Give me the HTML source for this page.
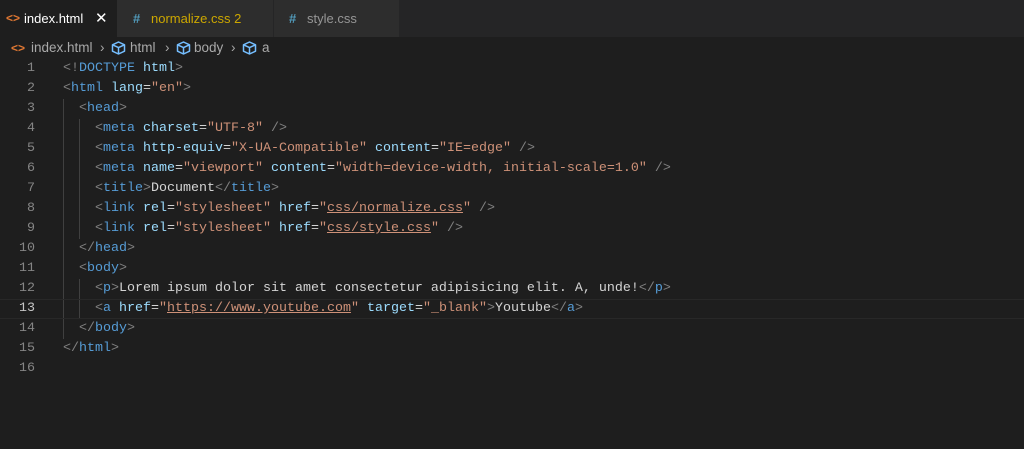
<!DOCTYPE html>
<html><head><style>
*{margin:0;padding:0;box-sizing:border-box}
body{width:1024px;height:449px;background:#1e1e1e;overflow:hidden;font-family:"Liberation Sans",sans-serif;position:relative}
.tabs{position:absolute;left:0;top:0;width:1024px;height:37px;background:#252526}
.tab{position:absolute;top:0;height:37px;font-size:13px;line-height:37px;white-space:nowrap}
.t1{left:0;width:117px;background:#1e1e1e;color:#fff}
.t2{left:117px;width:156px;background:#2d2d2d;color:#cca700}
.t3{left:274px;width:125px;background:#2d2d2d;color:#969696}
.hash{color:#519aba;font-weight:bold;margin-right:10px}
.bc{position:absolute;top:38px;left:0;height:20px;width:400px;font-size:13.5px;color:#a9a9a9;white-space:nowrap}
.bc span,.bc svg{position:absolute;top:0;line-height:20px}
.bc svg{top:3px}
.code{position:absolute;top:59px;left:0;width:1024px;font-family:"Liberation Mono",monospace;font-size:13.33px}
.ln{height:20px;line-height:20px;white-space:pre;position:relative}
.n{position:absolute;left:0;width:35px;text-align:right;color:#858585}
.c{position:absolute;left:63px;color:#d4d4d4}
.cur{border-top:1px solid #282828;border-bottom:1px solid #282828;}
.cur .n{color:#c6c6c6}
.g{color:#808080}.t{color:#569cd6}.a{color:#9cdcfe}.s{color:#ce9178}.u{text-decoration:underline}
.guide{position:absolute;width:1px;background:#404040}
</style></head><body>
<div class="tabs">
 <div class="tab t1"><span style="position:absolute;left:6px;color:#e37933;font-size:12px;font-weight:bold">&lt;&gt;</span><span style="position:absolute;left:24px">index.html</span><span style="position:absolute;left:95px;font-size:15px">✕</span></div>
 <div class="tab t2"><span style="position:absolute;left:16px" class="hash">#</span><span style="position:absolute;left:34px">normalize.css 2</span></div>
 <div class="tab t3"><span style="position:absolute;left:15px" class="hash">#</span><span style="position:absolute;left:33px">style.css</span></div>
</div>
<div class="bc">
<span style="left:11px;color:#e37933;font-weight:bold;font-size:12px">&lt;&gt;</span>
<span style="left:31px">index.html</span>
<span style="left:100px">›</span>
<svg style="left:111px" width="15" height="14" viewBox="0 0 15 14"><path d="M7.5 1L13.5 3.8V10.2L7.5 13L1.5 10.2V3.8Z M1.5 3.8L7.5 6.6L13.5 3.8 M7.5 6.6V13" fill="none" stroke="#75beff" stroke-width="1.5" stroke-linejoin="round"/></svg>
<span style="left:130px">html</span>
<span style="left:165px">›</span>
<svg style="left:176px" width="15" height="14" viewBox="0 0 15 14"><path d="M7.5 1L13.5 3.8V10.2L7.5 13L1.5 10.2V3.8Z M1.5 3.8L7.5 6.6L13.5 3.8 M7.5 6.6V13" fill="none" stroke="#75beff" stroke-width="1.5" stroke-linejoin="round"/></svg>
<span style="left:194px">body</span>
<span style="left:231px">›</span>
<svg style="left:242px" width="15" height="14" viewBox="0 0 15 14"><path d="M7.5 1L13.5 3.8V10.2L7.5 13L1.5 10.2V3.8Z M1.5 3.8L7.5 6.6L13.5 3.8 M7.5 6.6V13" fill="none" stroke="#75beff" stroke-width="1.5" stroke-linejoin="round"/></svg>
<span style="left:262px">a</span>
</div>
<div class="code">
<div class="guide" style="left:63px;top:40px;height:240px"></div>
<div class="guide" style="left:79px;top:60px;height:120px"></div>
<div class="guide" style="left:79px;top:220px;height:40px"></div>
<div class="ln"><span class="n">1</span><span class="c"><span class="g">&lt;!</span><span class="t">DOCTYPE</span> <span class="a">html</span><span class="g">&gt;</span></span></div>
<div class="ln"><span class="n">2</span><span class="c"><span class="g">&lt;</span><span class="t">html</span> <span class="a">lang</span>=<span class="s">"en"</span><span class="g">&gt;</span></span></div>
<div class="ln"><span class="n">3</span><span class="c">  <span class="g">&lt;</span><span class="t">head</span><span class="g">&gt;</span></span></div>
<div class="ln"><span class="n">4</span><span class="c">    <span class="g">&lt;</span><span class="t">meta</span> <span class="a">charset</span>=<span class="s">"UTF-8"</span> <span class="g">/&gt;</span></span></div>
<div class="ln"><span class="n">5</span><span class="c">    <span class="g">&lt;</span><span class="t">meta</span> <span class="a">http-equiv</span>=<span class="s">"X-UA-Compatible"</span> <span class="a">content</span>=<span class="s">"IE=edge"</span> <span class="g">/&gt;</span></span></div>
<div class="ln"><span class="n">6</span><span class="c">    <span class="g">&lt;</span><span class="t">meta</span> <span class="a">name</span>=<span class="s">"viewport"</span> <span class="a">content</span>=<span class="s">"width=device-width, initial-scale=1.0"</span> <span class="g">/&gt;</span></span></div>
<div class="ln"><span class="n">7</span><span class="c">    <span class="g">&lt;</span><span class="t">title</span><span class="g">&gt;</span>Document<span class="g">&lt;/</span><span class="t">title</span><span class="g">&gt;</span></span></div>
<div class="ln"><span class="n">8</span><span class="c">    <span class="g">&lt;</span><span class="t">link</span> <span class="a">rel</span>=<span class="s">"stylesheet"</span> <span class="a">href</span>=<span class="s">"<span class="u">css/normalize.css</span>"</span> <span class="g">/&gt;</span></span></div>
<div class="ln"><span class="n">9</span><span class="c">    <span class="g">&lt;</span><span class="t">link</span> <span class="a">rel</span>=<span class="s">"stylesheet"</span> <span class="a">href</span>=<span class="s">"<span class="u">css/style.css</span>"</span> <span class="g">/&gt;</span></span></div>
<div class="ln"><span class="n">10</span><span class="c">  <span class="g">&lt;/</span><span class="t">head</span><span class="g">&gt;</span></span></div>
<div class="ln"><span class="n">11</span><span class="c">  <span class="g">&lt;</span><span class="t">body</span><span class="g">&gt;</span></span></div>
<div class="ln"><span class="n">12</span><span class="c">    <span class="g">&lt;</span><span class="t">p</span><span class="g">&gt;</span>Lorem ipsum dolor sit amet consectetur adipisicing elit. A, unde!<span class="g">&lt;/</span><span class="t">p</span><span class="g">&gt;</span></span></div>
<div class="ln cur" style="line-height:18px"><span class="n">13</span><span class="c">    <span class="g">&lt;</span><span class="t">a</span> <span class="a">href</span>=<span class="s">"<span class="u">https://www.youtube.com</span>"</span> <span class="a">target</span>=<span class="s">"_blank"</span><span class="g">&gt;</span>Youtube<span class="g">&lt;/</span><span class="t">a</span><span class="g">&gt;</span></span></div>
<div class="ln"><span class="n">14</span><span class="c">  <span class="g">&lt;/</span><span class="t">body</span><span class="g">&gt;</span></span></div>
<div class="ln"><span class="n">15</span><span class="c"><span class="g">&lt;/</span><span class="t">html</span><span class="g">&gt;</span></span></div>
<div class="ln"><span class="n">16</span></div>
</div>
</body></html>
